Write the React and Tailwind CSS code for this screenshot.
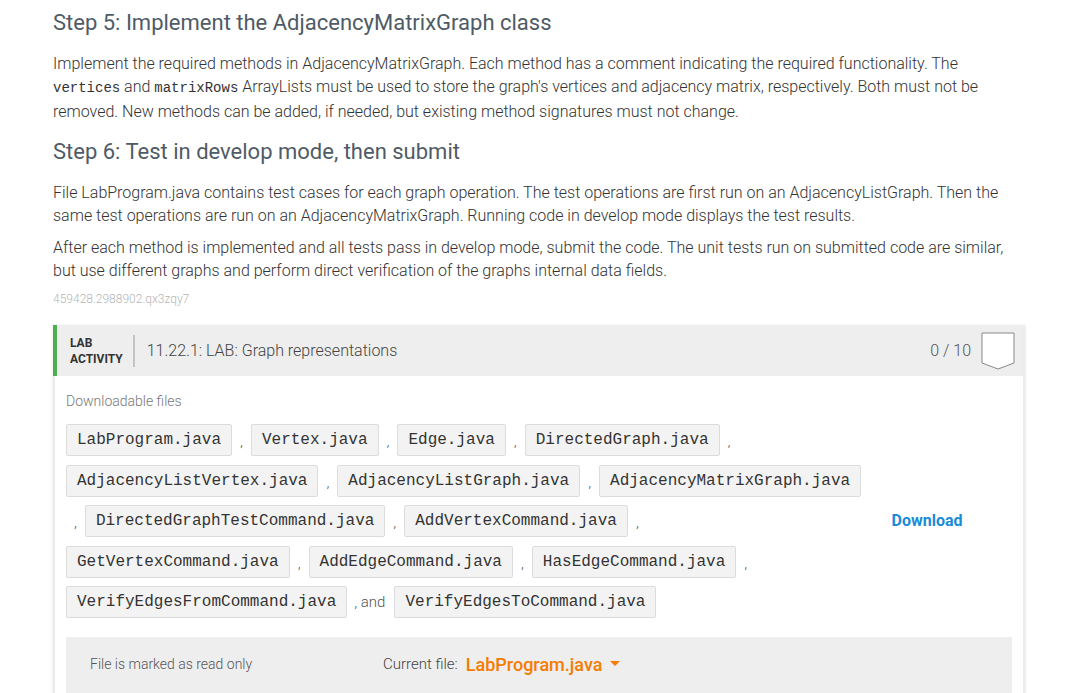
const rows = [
    { lead: false, items: ["LabProgram.java", "Vertex.java", "Edge.java", "DirectedGraph.java"], tail: "," },
    { lead: false, items: ["AdjacencyListVertex.java", "AdjacencyListGraph.java", "AdjacencyMatrixGraph.java"], tail: "" },
    { lead: true, items: ["DirectedGraphTestCommand.java", "AddVertexCommand.java"], tail: "," },
    { lead: false, items: ["GetVertexCommand.java", "AddEdgeCommand.java", "HasEdgeCommand.java"], tail: "," },
];

function Chip({ name }) {
    return (
        <span className="inline-flex items-center h-[32px] px-[10px] bg-[#f3f3f3] border border-[#dcdcdc] rounded-[2px] text-[16px] font-normal text-[#333] font-['Liberation_Mono',monospace]">
            {name}
        </span>
    );
}

function Sep() {
    return <span className="text-[15px] text-[#555] px-[8px] pt-[6px] font-light">,</span>;
}

export default function App() {
    return (
        <div className="bg-white min-h-screen font-['Roboto',sans-serif] text-[#333]">
            <div className="w-[972px] ml-[53px]">

                {/* STEP 5 */}
                <h2 className="text-[22px] text-[#4f5b66] pt-[8px] leading-[30px]">
                    Step 5: Implement the AdjacencyMatrixGraph class
                </h2>
                <p className="mt-[14px] text-[16px] leading-[23px] font-light text-[#333]">
                    Implement the required methods in AdjacencyMatrixGraph. Each method has a comment indicating the required functionality. The{" "}
                    <code className="font-['Liberation_Mono',monospace] text-[14px] font-normal">vertices</code> and{" "}
                    <code className="font-['Liberation_Mono',monospace] text-[14px] font-normal">matrixRows</code> ArrayLists must be used to store the graph's vertices and adjacency matrix, respectively. Both must not be removed. New methods can be added, if needed, but existing method signatures must not change.
                </p>

                {/* STEP 6 */}
                <h2 className="mt-[14px] text-[22px] text-[#4f5b66] leading-[30px]">
                    Step 6: Test in develop mode, then submit
                </h2>
                <p className="mt-[14px] text-[16px] leading-[23px] font-light">
                    File LabProgram.java contains test cases for each graph operation. The test operations are first run on an AdjacencyListGraph. Then the same test operations are run on an AdjacencyMatrixGraph. Running code in develop mode displays the test results.
                </p>
                <p className="mt-[9px] text-[16px] leading-[23px] font-light">
                    After each method is implemented and all tests pass in develop mode, submit the code. The unit tests run on submitted code are similar, but use different graphs and perform direct verification of the graphs internal data fields.
                </p>
                <div className="mt-[8px] text-[12px] text-[#b5b5b5] font-light">459428.2988902.qx3zqy7</div>

                {/* LAB PANEL */}
                <div className="mt-[17px] border-x-[2px] border-[#ececec] shadow-[0_1px_3px_rgba(0,0,0,0.12)]">
                    <div className="flex items-center h-[51px] bg-[#eeeeee] border-l-[4px] border-[#4caf50] -ml-[2px]">
                        <div className="pl-[13px] pr-[10px] text-[12px] font-bold leading-[16px] text-[#333] border-r-[2px] border-[#c4c4c4] mr-[12px]">
                            LAB<br />ACTIVITY
                        </div>
                        <div className="text-[16px] text-[#444] font-light">11.22.1: LAB: Graph representations</div>
                        <div className="ml-auto flex items-center gap-[10px] mr-[8px]">
                            <span className="text-[16px] text-[#555] font-light">0 / 10</span>
                            <svg width="34" height="38" viewBox="0 0 34 38">
                                <path d="M1 1 H33 V31 L17 37 L1 31 Z" fill="#fff" stroke="#888" strokeWidth="1" />
                            </svg>
                        </div>
                    </div>

                    <div className="bg-white px-[11px] pt-[15px] pb-[1px]">
                        <div className="text-[14px] text-[#777] font-light">Downloadable files</div>

                        <div className="flex mt-[12px]">
                            <div className="w-[800px] flex flex-col gap-[8.5px]">
                                {rows.map((r, i) => (
                                    <div key={i} className="flex items-start">
                                        {r.lead && <Sep />}
                                        {r.items.map((n, j) => (
                                            <span key={n} className="flex items-start">
                                                <Chip name={n} />
                                                {(j < r.items.length - 1 || r.tail) && <Sep />}
                                            </span>
                                        ))}
                                    </div>
                                ))}
                                <div className="flex items-start">
                                    <Chip name="VerifyEdgesFromCommand.java" />
                                    <span className="text-[15px] text-[#555] font-light pl-[7px] pr-[9px] pt-[5px]">, and</span>
                                    <Chip name="VerifyEdgesToCommand.java" />
                                </div>
                            </div>
                            <div className="flex-1 flex items-center justify-center pr-[24px]">
                                <span className="text-[16px] font-bold text-[#1a8bd6]">Download</span>
                            </div>
                        </div>

                        <div className="mt-[19px] bg-[#eeeeee] h-[60px] flex items-center pl-[24px] pb-[6px]">
                            <span className="text-[14px] text-[#555] font-light w-[293px]">File is marked as read only</span>
                            <span className="text-[15px] text-[#444] font-light">Current file:</span>
                            <span className="ml-[8px] text-[18px] font-medium text-[#f57c00]">LabProgram.java</span>
                            <svg className="ml-[8px]" width="10" height="6" viewBox="0 0 10 6">
                                <path d="M0 0 H10 L5 5 Z" fill="#f57c00" />
                            </svg>
                        </div>
                    </div>
                </div>
            </div>
        </div>
    );
}
